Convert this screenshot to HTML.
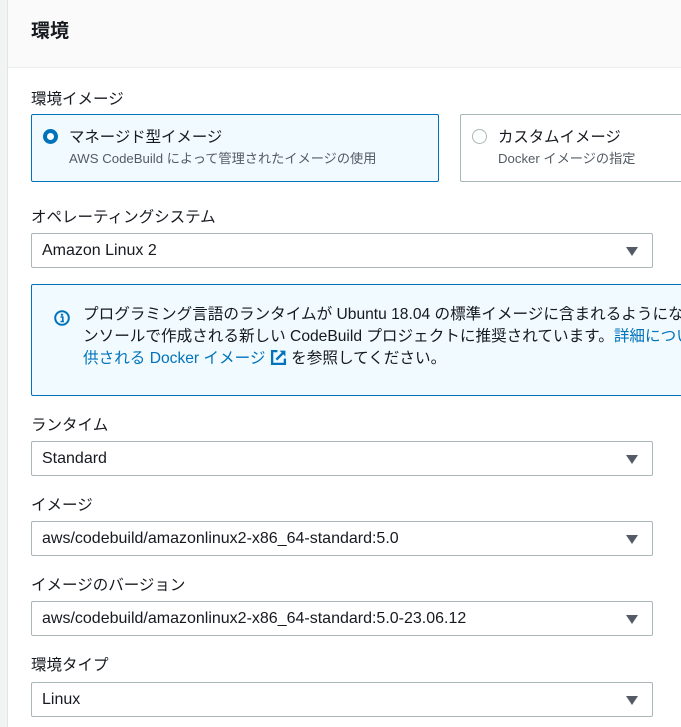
<!DOCTYPE html>
<html><head><meta charset="utf-8"><style>
*{box-sizing:border-box;margin:0;padding:0}
body{width:681px;height:727px;overflow:hidden;background:#fff;font-family:"Liberation Sans","Noto Sans CJK JP",sans-serif;color:#16191f;position:relative}
.strip{position:absolute;left:0;top:0;width:8px;height:727px;background:#f2f3f3;border-right:1px solid #e4e6e6}
.head{position:absolute;left:8px;top:0;width:673px;height:68px;background:#fafafa;border-bottom:1px solid #eaeded}
.head h2{position:absolute;left:23px;top:16px;font-size:19px;font-weight:bold;color:#16191f}
.lab{position:absolute;left:31px;font-size:15.5px;color:#16191f;white-space:nowrap}
.card{position:absolute;top:114px;height:68px;border:1px solid #aab7b8;border-radius:2px;background:#fff;white-space:nowrap}
.card.sel{border-color:#0073bb;background:#f1faff}
.card .t{position:absolute;left:37px;top:10px;font-size:15.4px}
.card .s{position:absolute;left:37px;top:33px;font-size:13.2px;color:#545b64}
.rad{position:absolute;left:11px;top:14px;width:15px;height:15px;border-radius:50%}
.sel .rad{border:4px solid #0073bb;background:#fff}
.un .rad{border:1px solid #aab7b8;background:#fff}
.selbox{position:absolute;left:31px;width:622px;height:35px;border:1px solid #aab7b8;border-radius:2px;background:#fff;font-size:16px;padding:8px 0 0 10px;white-space:nowrap}
.selbox:after{content:"";position:absolute;right:14px;top:13px;border-left:6px solid transparent;border-right:6px solid transparent;border-top:9px solid #545b64}
.info{position:absolute;left:31px;top:284px;width:660px;height:112px;border:1px solid #0073bb;border-radius:2px;background:#f1faff;overflow:hidden}
.info .ic{position:absolute;left:22px;top:25px}
.info p{position:absolute;left:51px;top:19px;font-size:15.6px;line-height:22px;white-space:nowrap;color:#16191f}
a{color:#0073bb;text-decoration:none}
</style></head><body>
<div class="strip"></div>
<div class="head"><h2>環境</h2></div>
<div class="lab" style="top:87px">環境イメージ</div>
<div class="card sel" style="left:31px;width:408px"><div class="rad"></div><div class="t">マネージド型イメージ</div><div class="s">AWS CodeBuild によって管理されたイメージの使用</div></div>
<div class="card un" style="left:460px;width:240px"><div class="rad"></div><div class="t">カスタムイメージ</div><div class="s">Docker イメージの指定</div></div>
<div class="lab" style="top:205px">オペレーティングシステム</div>
<div class="selbox" style="top:233px">Amazon Linux 2</div>
<div class="info">
<svg class="ic" width="16" height="16" viewBox="0 0 16 16"><circle cx="8" cy="8" r="6.8" fill="none" stroke="#0073bb" stroke-width="2"/><circle cx="8" cy="4.8" r="1.2" fill="#0073bb"/><path d="M6.5 7h2.3v4.5M6.5 11.5h3.5" stroke="#0073bb" stroke-width="1.6" fill="none"/></svg>
<p>プログラミング言語のランタイムが Ubuntu 18.04 の標準イメージに含まれるようにな<br>ンソールで作成される新しい CodeBuild プロジェクトに推奨されています。<a>詳細につい</a><br><a>供される Docker イメージ <svg width="17" height="17" viewBox="0 0 16 16" style="vertical-align:-3px"><path d="M7 2H2v12h12V9" fill="none" stroke="#0073bb" stroke-width="2.2"/><path d="M9 1.5h5.5V7z" fill="#0073bb"/><path d="M6 10l7-7" stroke="#0073bb" stroke-width="2.2"/></svg></a> を参照してください。</p>
</div>
<div class="lab" style="top:413px">ランタイム</div>
<div class="selbox" style="top:441px">Standard</div>
<div class="lab" style="top:493px">イメージ</div>
<div class="selbox" style="top:521px">aws/codebuild/amazonlinux2-x86_64-standard:5.0</div>
<div class="lab" style="top:573px">イメージのバージョン</div>
<div class="selbox" style="top:601px">aws/codebuild/amazonlinux2-x86_64-standard:5.0-23.06.12</div>
<div class="lab" style="top:653px">環境タイプ</div>
<div class="selbox" style="top:682px">Linux</div>
</body></html>
